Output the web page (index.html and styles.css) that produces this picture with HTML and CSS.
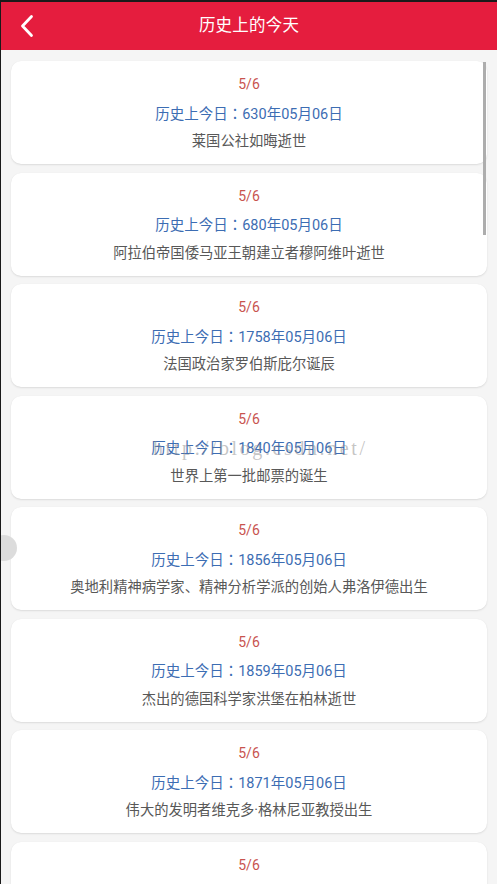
FILE: index.html
```html
<!DOCTYPE html>
<html lang="zh-CN">
<head>
<meta charset="utf-8">
<title>历史上的今天</title>
<link rel="stylesheet" href="styles.css">
</head>
<body>
<div class="app">
  <header class="topbar">
    <span class="back">
      <svg width="14" height="24" viewBox="0 0 14 24"><path d="M11.5 2.5 L2.5 12 L11.5 21.5" fill="none" stroke="#fff" stroke-width="2.8" stroke-linecap="round" stroke-linejoin="round"/></svg>
    </span>
    <h1 class="title">历史上的今天</h1>
  </header>
  <main class="list">
    <div class="card"><p class="md">5/6</p><p class="date">历史上今日<span class="colon" lang="zh-TW">：</span>630年05月06日</p><p class="desc">莱国公社如晦逝世</p></div>
    <div class="card"><p class="md">5/6</p><p class="date">历史上今日<span class="colon" lang="zh-TW">：</span>680年05月06日</p><p class="desc">阿拉伯帝国倭马亚王朝建立者穆阿维叶逝世</p></div>
    <div class="card"><p class="md">5/6</p><p class="date">历史上今日<span class="colon" lang="zh-TW">：</span>1758年05月06日</p><p class="desc">法国政治家罗伯斯庇尔诞辰</p></div>
    <div class="card"><p class="md">5/6</p><p class="date">历史上今日<span class="colon" lang="zh-TW">：</span>1840年05月06日</p><p class="desc">世界上第一批邮票的诞生</p></div>
    <div class="card"><p class="md">5/6</p><p class="date">历史上今日<span class="colon" lang="zh-TW">：</span>1856年05月06日</p><p class="desc">奥地利精神病学家、精神分析学派的创始人弗洛伊德出生</p></div>
    <div class="card"><p class="md">5/6</p><p class="date">历史上今日<span class="colon" lang="zh-TW">：</span>1859年05月06日</p><p class="desc">杰出的德国科学家洪堡在柏林逝世</p></div>
    <div class="card"><p class="md">5/6</p><p class="date">历史上今日<span class="colon" lang="zh-TW">：</span>1871年05月06日</p><p class="desc">伟大的发明者维克多·格林尼亚教授出生</p></div>
    <div class="card"><p class="md">5/6</p><p class="date">历史上今日<span class="colon" lang="zh-TW">：</span>1889年05月06日</p><p class="desc">巴黎埃菲尔铁塔落成</p></div>
  </main>
  <div class="scrollbar"></div>
  <div class="float-ball"></div>
  <div class="watermark">http://blog.csdn.net/</div>
</div>
</body>
</html>
```
FILE: styles.css
```css
html, body {
  margin: 0;
  padding: 0;
  height: 100%;
  overflow: hidden;
}
body {
  background: #1a1a1a;
  font-family: Roboto, "Noto Sans CJK SC", sans-serif;
}
.app {
  position: relative;
  margin-top: 2px;
  margin-left: 1px;
  height: 882px;
  background: #f5f5f5;
  overflow: hidden;
}
.topbar {
  height: 48px;
  background: #e51d3e;
  display: flex;
  align-items: center;
  justify-content: center;
  position: relative;
}
.back {
  position: absolute;
  left: 19px;
  top: 12px;
  width: 14px;
  height: 24px;
  display: flex;
}
.title {
  margin: 0;
  color: #fff;
  font-size: 16.5px;
  font-weight: normal;
  line-height: 48px;
  letter-spacing: 0.2px;
}
.list {
  padding: 11px 10px 0 10px;
  display: flex;
  flex-direction: column;
  gap: 8.5px;
}
.card {
  background: #fff;
  border-radius: 10px;
  box-shadow: 0 1px 2px rgba(0,0,0,0.10), 0 0 1px rgba(0,0,0,0.06);
  height: 103px;
  box-sizing: border-box;
  padding-top: 9px;
  text-align: center;
}
.card p {
  margin: 0;
  height: 28.5px;
  line-height: 28.5px;
  overflow: visible;
}
.md {
  color: #c8534f;
  font-size: 14px;
}
.date {
  color: #3c6db3;
  font-size: 14.5px;
}
.colon {
  font-family: "Noto Sans CJK TC", sans-serif;
}
.desc {
  color: #585858;
  font-size: 14.3px;
}
.scrollbar {
  position: absolute;
  right: 11px;
  top: 60px;
  width: 3px;
  height: 173px;
  background: #adadad;
}
.float-ball {
  position: absolute;
  left: -10px;
  top: 533px;
  width: 26px;
  height: 26px;
  border-radius: 50%;
  background: #dcdcdc;
  box-shadow: inset 8px 0 0 -5px #7da88a;
}
.watermark {
  position: absolute;
  left: 152px;
  top: 435px;
  font-family: "Liberation Serif", serif;
  font-size: 20px;
  letter-spacing: 2.6px;
  color: rgba(140,140,140,0.5);
  pointer-events: none;
}
```
